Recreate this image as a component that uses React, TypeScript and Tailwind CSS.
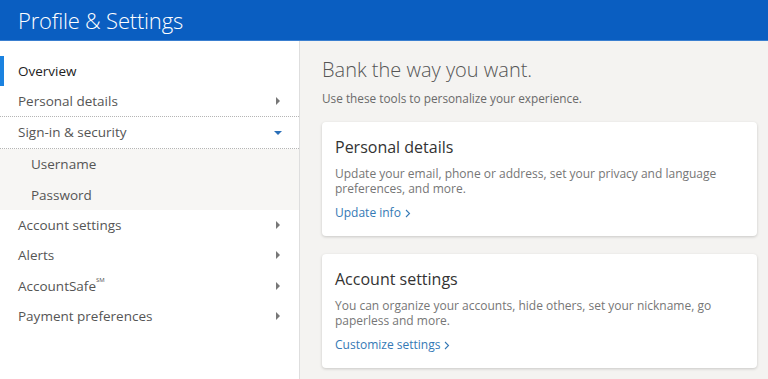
import React from "react";

const font = { fontFamily: '"Open Sans", "Noto Sans", sans-serif' };

function Tri({ down = false }: { down?: boolean }) {
  return down ? (
    <svg width="8" height="6" viewBox="0 0 8 6" className="mr-[17px]">
      <path d="M0 1 L8 1 L4 5 Z" fill="#2a6fb8" />
    </svg>
  ) : (
    <svg width="6" height="8" viewBox="0 0 6 8" className="mr-[18px]">
      <path d="M1 0 L5 4 L1 8 Z" fill="#777" />
    </svg>
  );
}

function NavItem({
  label,
  arrow,
  down,
  border,
  sup,
}: {
  label: string;
  arrow?: boolean;
  down?: boolean;
  border?: boolean;
  sup?: string;
}) {
  return (
    <div
      className={`h-[30.4px] flex items-center justify-between pl-[18px] text-[13.5px] text-[#555] ${
        border ? "box-content border-b border-dotted border-[#b5b5b5]" : ""
      }`}
    >
      <span>
        {label}
        {sup && <sup className="text-[6px] align-super">{sup}</sup>}
      </span>
      {arrow && <Tri down={down} />}
    </div>
  );
}

function Card({ title, desc, link }: { title: string; desc: string; link: string }) {
  return (
    <div className="bg-white rounded-[4px] shadow-[0_1px_3px_rgba(0,0,0,0.18)] px-[13px] pt-[14px] pb-[14px]">
      <div className="text-[16px] leading-[22px] text-[#333]">{title}</div>
      <div className="mt-[8px] text-[12px] leading-[15px] text-[#767676]">{desc}</div>
      <div className="mt-[8px] text-[12px] leading-[18px] text-[#3579b5] flex items-center gap-[4px]">
        {link}
        <svg width="6" height="9" viewBox="0 0 6 9">
          <path d="M1 1 L4.5 4.5 L1 8" fill="none" stroke="#3579b5" strokeWidth="1.1" />
        </svg>
      </div>
    </div>
  );
}

export default function App() {
  return (
    <div style={font} className="w-[768px] h-[379px] overflow-hidden flex flex-col bg-white">
      <div className="h-[40px] shrink-0 bg-[#0a5ec1] border-b border-[#3a7fd0] box-content flex items-center pl-[18px]">
        <span className="text-white text-[22px] font-light tracking-[-0.2px]">Profile &amp; Settings</span>
      </div>
      <div className="flex flex-1">
        <div className="w-[300px] shrink-0 border-r border-[#dedede] pt-[15px]">
          <div className="relative h-[30px] flex items-center pl-[18px] text-[13.5px] text-[#222]">
            <div className="absolute left-0 top-0 w-[4px] h-[30px] bg-[#1b82e0]" />
            Overview
          </div>
          <NavItem label="Personal details" arrow border />
          <NavItem label="Sign-in & security" arrow down border />
          <div className="bg-[#f7f6f4]">
            <div className="h-[31px] flex items-center pl-[31px] text-[13.5px] text-[#555]">Username</div>
            <div className="h-[30px] flex items-center pl-[31px] text-[13.5px] text-[#555]">Password</div>
          </div>
          <NavItem label="Account settings" arrow />
          <NavItem label="Alerts" arrow />
          <NavItem label="AccountSafe" sup="SM" arrow />
          <NavItem label="Payment preferences" arrow />
        </div>
        <div className="flex-1 bg-[#f4f3f1] pl-[22px] pr-[11px] pt-[15px]">
          <div className="text-[20px] leading-[28px] font-light text-[#555]">Bank the way you want.</div>
          <div className="mt-[5px] text-[11.8px] leading-[18px] text-[#6a6a6a]">
            Use these tools to personalize your experience.
          </div>
          <div className="mt-[15px] flex flex-col gap-[18px]">
            <Card
              title="Personal details"
              desc="Update your email, phone or address, set your privacy and language preferences, and more."
              link="Update info"
            />
            <Card
              title="Account settings"
              desc="You can organize your accounts, hide others, set your nickname, go paperless and more."
              link="Customize settings"
            />
          </div>
        </div>
      </div>
    </div>
  );
}
